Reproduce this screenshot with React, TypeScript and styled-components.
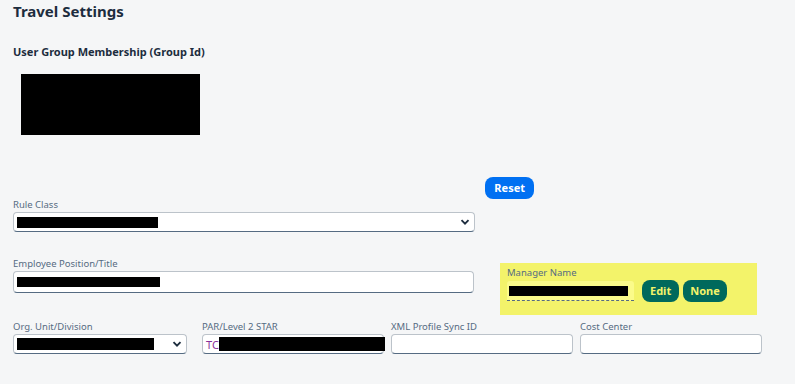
import { createGlobalStyle } from "styled-components";
import styled from "styled-components";

const GlobalStyle = createGlobalStyle`
  html, body {
    margin: 0;
    padding: 0;
    background: #f5f6f7;
    font-family: "Noto Sans", "Open Sans", sans-serif;
    color: #1d2d3e;
  }
`;

const Page = styled.div`
  width: 795px;
  height: 384px;
  padding: 0 0 0 13px;
  box-sizing: border-box;
  overflow: hidden;
`;

const Title = styled.h1`
  margin: 0;
  padding-top: 1px;
  font-size: 15px;
  line-height: 20px;
  font-weight: 700;
  color: #1d2d3e;
`;

const SubTitle = styled.h2`
  margin: 23px 0 0;
  font-size: 11px;
  line-height: 16px;
  font-weight: 700;
  color: #1d2d3e;
`;

const Redacted = styled.div<{ $w: number; $h: number }>`
  width: ${(p) => p.$w}px;
  height: ${(p) => p.$h}px;
  background: #000;
  flex-shrink: 0;
`;

const GroupBox = styled.div`
  margin: 14px 0 0 8px;
`;

const ResetRow = styled.div`
  width: 521px;
  display: flex;
  justify-content: flex-end;
  margin-top: 42px;
`;

const Pill = styled.button<{ $bg: string; $fg: string; $px?: number }>`
  height: 22px;
  padding: 0 ${(p) => p.$px ?? 9}px;
  border: none;
  border-radius: 8px;
  background: ${(p) => p.$bg};
  color: ${(p) => p.$fg};
  font-family: inherit;
  font-size: 11px;
  font-weight: 700;
  line-height: 22px;
  cursor: pointer;
`;

const Field = styled.div<{ $w: number }>`
  width: ${(p) => p.$w}px;
  display: flex;
  flex-direction: column;
`;

const Label = styled.label`
  display: block;
  font-size: 9.5px;
  line-height: 12px;
  color: #556b82;
  margin-bottom: 1px;
  white-space: nowrap;
`;

const Box = styled.div<{ $w?: number; $h?: number }>`
  height: ${(p) => p.$h ?? 20}px;
  width: ${(p) => (p.$w ? `${p.$w}px` : "100%")};
  box-sizing: border-box;
  background: #fff;
  border: 1px solid #bcc3ca;
  border-bottom-color: #556b82;
  border-radius: 4px;
  display: flex;
  align-items: center;
  padding: 0 4px 0 3px;
  font-size: 11px;
  color: #8a2e99;
`;

const Chevron = styled.svg`
  margin-left: auto;
  width: 10px;
  height: 10px;
`;

const MidRow = styled.div`
  display: flex;
  align-items: flex-start;
  margin-top: 31px;
  gap: 26px;
`;

const MidField = styled.div`
  margin-top: -5px;
`;

const Highlight = styled.div`
  width: 257px;
  height: 52px;
  box-sizing: border-box;
  background: #f3f36a;
  padding: 4px 7px 0;
`;

const ManagerRow = styled.div`
  display: flex;
  align-items: center;
  gap: 4px;
`;

const ManagerValue = styled.div`
  width: 127px;
  height: 20px;
  box-sizing: border-box;
  border-bottom: 1px dashed #556b82;
  display: flex;
  align-items: center;
  padding-left: 2px;
  margin-right: 4px;
  background: #fbfb8a;
  border-radius: 3px 3px 0 0;
`;

const BottomRow = styled.div`
  display: grid;
  grid-template-columns: repeat(4, 182px);
  column-gap: 7px;
  margin-top: 6px;
`;

const ChevronIcon = () => (
  <Chevron viewBox="0 0 10 10">
    <path d="M1.5 3.2 L5 6.7 L8.5 3.2" fill="none" stroke="#1d2d3e" strokeWidth="1.9" />
  </Chevron>
);

export default function App() {
  return (
    <>
      <GlobalStyle />
      <Page>
        <Title>Travel Settings</Title>
        <SubTitle>User Group Membership (Group Id)</SubTitle>
        <GroupBox>
          <Redacted $w={179} $h={61} />
        </GroupBox>
        <ResetRow>
          <Pill $bg="#0070f2" $fg="#fff">Reset</Pill>
        </ResetRow>
        <Field $w={462}>
          <Label>Rule Class</Label>
          <Box>
            <Redacted $w={141} $h={11} />
            <ChevronIcon />
          </Box>
        </Field>
        <MidRow>
          <MidField>
            <Field $w={461}>
              <Label>Employee Position/Title</Label>
              <Box $h={22}>
                <Redacted $w={143} $h={10} />
              </Box>
            </Field>
          </MidField>
          <Highlight>
            <Label>Manager Name</Label>
            <ManagerRow>
              <ManagerValue>
                <Redacted $w={119} $h={10} />
              </ManagerValue>
              <Pill $bg="#00695c" $fg="#f3f36a" $px={8}>Edit</Pill>
              <Pill $bg="#00695c" $fg="#f3f36a" $px={7}>None</Pill>
            </ManagerRow>
          </Highlight>
        </MidRow>
        <BottomRow>
          <Field $w={182}>
            <Label>Org. Unit/Division</Label>
            <Box $w={174}>
              <Redacted $w={137} $h={12} />
              <ChevronIcon />
            </Box>
          </Field>
          <Field $w={182}>
            <Label>PAR/Level 2 STAR</Label>
            <Box>
              TC
              <Redacted $w={166} $h={14} />
            </Box>
          </Field>
          <Field $w={182}>
            <Label>XML Profile Sync ID</Label>
            <Box />
          </Field>
          <Field $w={182}>
            <Label>Cost Center</Label>
            <Box />
          </Field>
        </BottomRow>
      </Page>
    </>
  );
}
